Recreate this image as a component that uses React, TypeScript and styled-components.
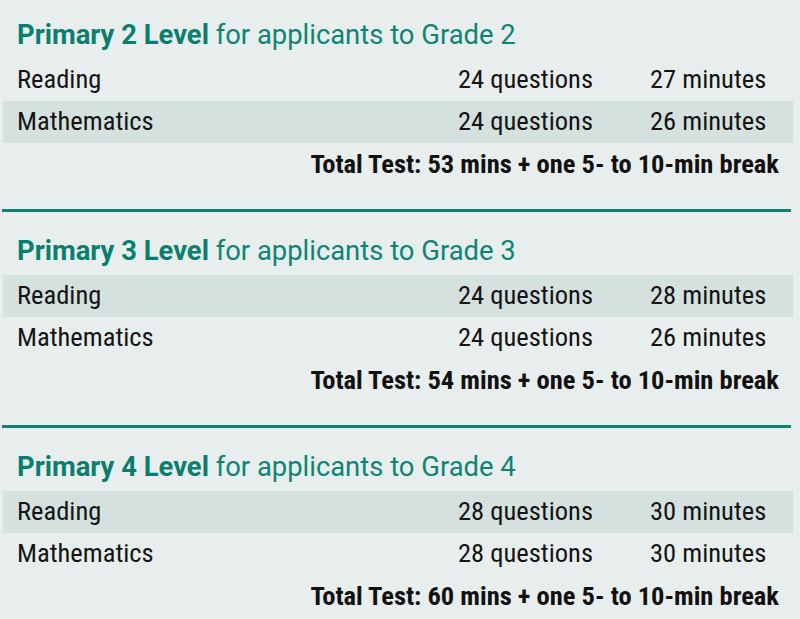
import React from "react";
import styled, { createGlobalStyle } from "styled-components";

const Global = createGlobalStyle`
  html, body { margin: 0; padding: 0; background: #e8eeed; }
  body { font-family: "Roboto", "Liberation Sans", sans-serif; }
  *, *::before, *::after { box-sizing: border-box; }
`;

const Page = styled.div`
  width: 793px;
  padding: 20px 0 0 3px;
`;

const Section = styled.section`
  display: flex;
  flex-direction: column;
`;

const Heading = styled.h2`
  margin: 0 0 9px 0;
  padding-left: 14px;
  height: 30px;
  line-height: 30px;
  font-family: "Roboto", sans-serif;
  font-size: 27.4px;
  font-weight: 400;
  color: #0d8572;
  white-space: nowrap;
  b { font-weight: 700; color: #0b7f6d; }
`;

const Row = styled.div<{ $shaded?: boolean }>`
  display: grid;
  grid-template-columns: 441px 192px 1fr;
  align-items: center;
  height: 42px;
  padding: 0 0 3px 14px;
  background: ${(p) => (p.$shaded ? "#d5e1de" : "transparent")};
  font-family: "Roboto Condensed", "Roboto", sans-serif;
  font-stretch: 87.5%;
  font-size: 26.5px;
  color: #141414;
  white-space: nowrap;
`;

const Total = styled.div`
  display: flex;
  justify-content: flex-end;
  align-items: center;
  height: 42px;
  padding: 0 14px 1px 0;
  font-family: "Roboto Condensed", "Roboto", sans-serif;
  font-stretch: 87.5%;
  font-size: 26.5px;
  font-weight: 700;
  color: #111;
  white-space: nowrap;
`;

const Divider = styled.hr`
  margin: 24px 0 24px -1px;
  border: 0;
  height: 3px;
  width: 789px;
  background: #0f8270;
`;

type Level = {
  n: number;
  rows: { name: string; q: string; m: string }[];
  total: string;
  shadeFirst: boolean;
};

const levels: Level[] = [
  {
    n: 2,
    rows: [
      { name: "Reading", q: "24 questions", m: "27 minutes" },
      { name: "Mathematics", q: "24 questions", m: "26 minutes" },
    ],
    total: "Total Test: 53 mins + one 5- to 10-min break",
    shadeFirst: false,
  },
  {
    n: 3,
    rows: [
      { name: "Reading", q: "24 questions", m: "28 minutes" },
      { name: "Mathematics", q: "24 questions", m: "26 minutes" },
    ],
    total: "Total Test: 54 mins + one 5- to 10-min break",
    shadeFirst: true,
  },
  {
    n: 4,
    rows: [
      { name: "Reading", q: "28 questions", m: "30 minutes" },
      { name: "Mathematics", q: "28 questions", m: "30 minutes" },
    ],
    total: "Total Test: 60 mins + one 5- to 10-min break",
    shadeFirst: true,
  },
];

export default function App() {
  return (
    <>
      <Global />
      <Page>
        {levels.map((lv, i) => (
          <React.Fragment key={lv.n}>
            <Section>
              <Heading>
                <b>Primary {lv.n} Level</b> for applicants to Grade {lv.n}
              </Heading>
              {lv.rows.map((r, j) => (
                <Row key={r.name} $shaded={lv.shadeFirst ? j === 0 : j === 1}>
                  <span>{r.name}</span>
                  <span>{r.q}</span>
                  <span>{r.m}</span>
                </Row>
              ))}
              <Total>{lv.total}</Total>
            </Section>
            {i < levels.length - 1 && <Divider />}
          </React.Fragment>
        ))}
      </Page>
    </>
  );
}
